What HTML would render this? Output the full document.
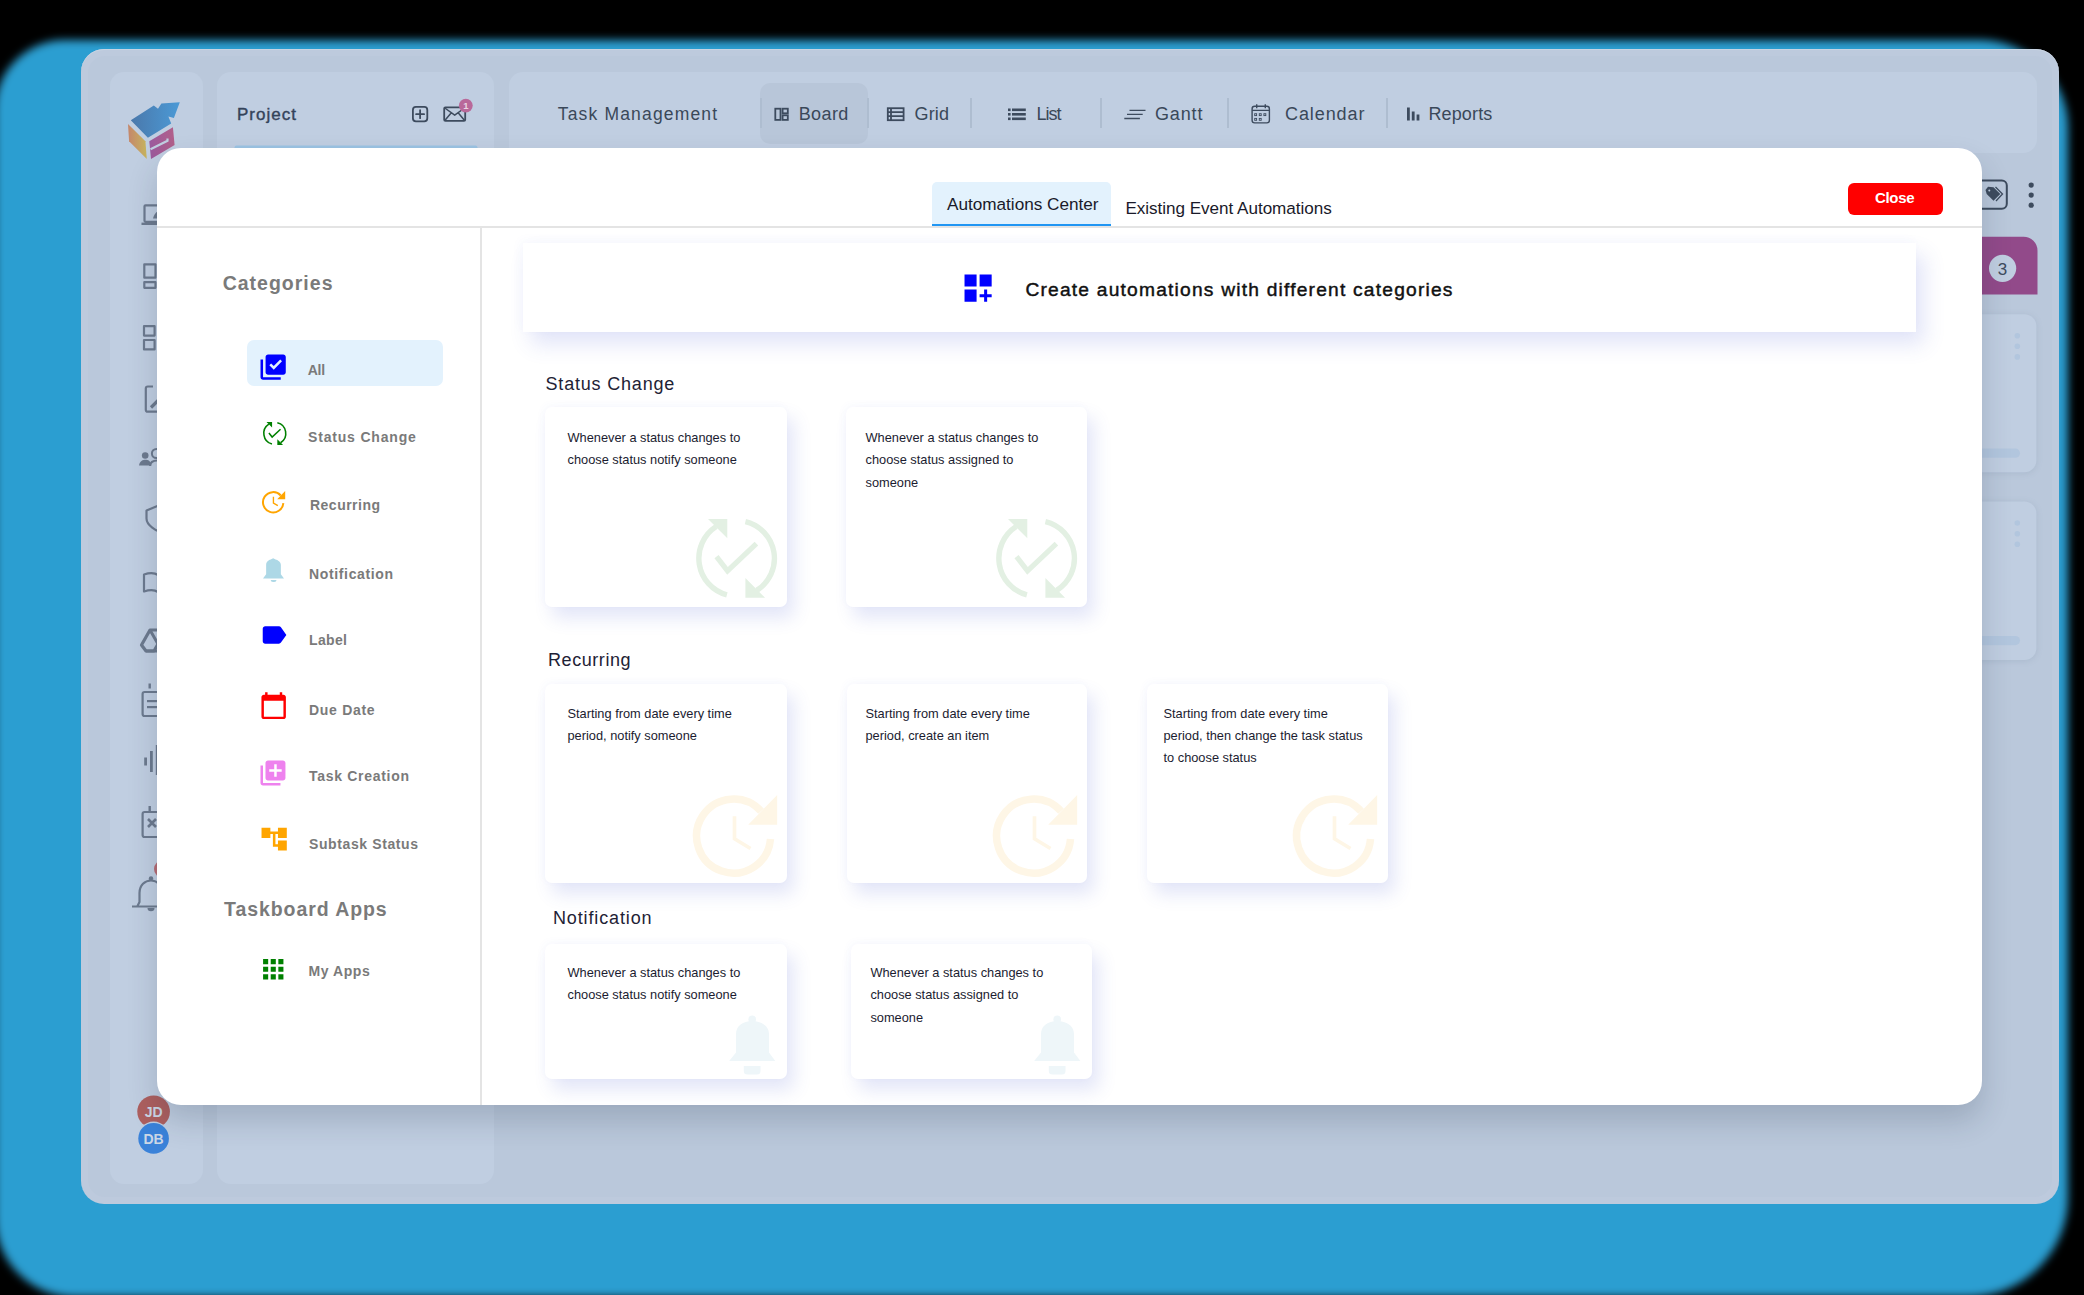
<!DOCTYPE html>
<html><head><meta charset="utf-8">
<style>
*{margin:0;padding:0;box-sizing:border-box}
html,body{width:2084px;height:1295px;overflow:hidden;background:#000;font-family:"Liberation Sans",sans-serif}
.a{position:absolute}
.t{position:absolute;white-space:nowrap;line-height:1}
#blue{left:-5px;top:40px;width:2073px;height:1257px;background:#2b9ed1;border-radius:70px 88px 100px 80px;filter:blur(4px)}
#win{left:81px;top:49px;width:1978px;height:1155px;background:#bdcadd;border-radius:23px;box-shadow:inset 0 1px 0 #c8d3e2}
#wini{left:88px;top:56px;width:1964px;height:1141px;background:#bac8db;border-radius:17px}
.pan{background:#c0cee1;border-radius:14px}
.vd{position:absolute;width:2px;background:#aebdd0}
#modal{left:157px;top:148px;width:1825px;height:957px;background:#fff;border-radius:24px;box-shadow:0 16px 30px rgba(25,40,65,.19)}
.card{position:absolute;background:#fff;border-radius:7px;box-shadow:7px 11px 18px rgba(70,90,210,.15),-2px -2px 8px rgba(70,90,210,.03)}
</style></head><body>
<div id="blue" class="a"></div>
<div id="win" class="a"></div>
<div id="wini" class="a"></div>
<div class="a pan" style="left:110px;top:72px;width:93px;height:1112px"></div>
<div class="a pan" style="left:217px;top:72px;width:277px;height:1112px"></div>
<div class="a pan" style="left:509px;top:72px;width:1528px;height:81px;border-radius:14px 14px 14px 0"></div>
<div class="a" style="left:760px;top:83px;width:108px;height:61px;background:#b8c6d9;border-radius:10px"></div>

<svg class="a" style="left:0;top:0;width:2084px;height:1295px" viewBox="0 0 2084 1295">
<defs>
<linearGradient id="gtop" x1="0" x2="1" y1="0" y2="0"><stop offset="0" stop-color="#4a78ab"/><stop offset="1" stop-color="#4b9ad6"/></linearGradient>
<linearGradient id="gleft" x1="0" x2="1" y1="0" y2="0"><stop offset="0" stop-color="#c4866c"/><stop offset="1" stop-color="#c6b45e"/></linearGradient>
<linearGradient id="gright" x1="0" x2="1" y1="0" y2="0"><stop offset="0" stop-color="#9a5a9e"/><stop offset="1" stop-color="#b25f8a"/></linearGradient>
</defs>
<polygon fill="url(#gtop)" points="130.8,120.3 153.8,105.4 158,108.8 161.4,103.6 179.8,102.2 173.9,118.1 168.4,116.5 171.2,123.4 147.9,137.7"/>
<polygon fill="url(#gleft)" points="128,124.1 145.4,141.2 146.8,158.9 129.1,141.2"/>
<polygon fill="url(#gright)" points="149.3,141.2 172.9,127.3 174.6,145 151,158.9"/>
<path d="M150.5 149.2 L167.5 140.8 L167.5 138.6" stroke="#c0cee1" stroke-width="2.2" fill="none"/>
<g fill="none" stroke="#3d4b5e" stroke-width="1.8" stroke-linecap="round" stroke-linejoin="round">
<rect x="412.9" y="106.9" width="14.4" height="14.4" rx="3"/>
<path d="M420.1 110.2v8M416.1 114.2h8"/>
<rect x="444.2" y="107.3" width="21" height="13.6" rx="1.2"/>
<path d="M444.8 108 L454.7 115.2 L464.6 108 M445 120.3 L450.5 113.7 M464.4 120.3 L459 113.7" stroke-width="1.5"/>
</g>
<circle cx="465.8" cy="105.6" r="6.9" fill="#b9699a"/>
<text x="465.8" y="109.3" font-family="Liberation Sans" font-weight="bold" font-size="9.5" fill="#e8d5e2" text-anchor="middle">1</text>
<rect x="234.5" y="145.5" width="243" height="4" rx="2" fill="#9cc3e3"/>
<g fill="none" stroke="#3d4b5e" stroke-width="1.8">
<rect x="775.3" y="108.7" width="5.2" height="11.2"/>
<rect x="782.6" y="108.7" width="5.2" height="4.6"/>
<rect x="782.6" y="115.3" width="5.2" height="4.6"/>
<rect x="887.8" y="108.2" width="15.8" height="12"/>
<path d="M888 112.2h15.6M888 116.2h15.6M891 108.5v12"/>
<path d="M1129.5 110.3h16M1127 114.4h15.7M1124.3 118.5h15.6" stroke-width="1.3"/>
<rect x="1252.1" y="106.3" width="17.3" height="16.6" rx="2.6" stroke-width="1.4"/>
<path d="M1252.1 110.4h17.3M1256.7 104.2v4M1265.3 104.2v4" stroke-width="1.4"/>
<g stroke-width="0.9"><rect x="1254.7" y="113.7" width="1.9" height="1.9"/><rect x="1259.3" y="113.7" width="1.9" height="1.9"/><rect x="1263.9" y="113.7" width="1.9" height="1.9"/><rect x="1254.7" y="118.4" width="1.9" height="1.9"/><rect x="1259.3" y="118.4" width="1.9" height="1.9"/></g>
</g>
<g fill="#3d4b5e">
<rect x="1008" y="108.5" width="2.6" height="2.6"/><rect x="1012" y="108.5" width="13.8" height="2.6"/>
<rect x="1008" y="113" width="2.6" height="2.6"/><rect x="1012" y="113" width="13.8" height="2.6"/>
<rect x="1008" y="117.5" width="2.6" height="2.6"/><rect x="1012" y="117.5" width="13.8" height="2.6"/>
<rect x="1407" y="107.5" width="2.8" height="13"/><rect x="1411.8" y="111.5" width="2.8" height="9"/><rect x="1416.6" y="114.5" width="2.8" height="6"/>
</g>
<!-- left sidebar icons -->
<g fill="none" stroke="#6c7a8e" stroke-width="2.2" stroke-linejoin="round">
<rect x="144.5" y="205.3" width="24" height="16.5" rx="1"/>
<path d="M141.5 223.8h29" stroke-width="2.4"/>
<rect x="144.3" y="264.3" width="11.2" height="13.4"/>
<rect x="144.3" y="282.2" width="11.2" height="5.6"/>
<rect x="144" y="326.2" width="10.6" height="9.4"/>
<rect x="144" y="340" width="10.6" height="9.4"/>
<path d="M153 386.5 H147.8 A2 2 0 0 0 145.8 388.5 V409.7 A2 2 0 0 0 147.8 411.7 H166"/><path d="M151 407.5 L162 396.5" stroke-width="3.2"/>
<path d="M146.5 510.4 L158 505.8 L169 510.4 V518.5 C169 526 158 531 158 531 C158 531 146.5 526 146.5 518.5 Z"/>
<path d="M144 574.5 C150 572.5 155 573 158 575 V592 C155 590 150 589.5 144 591.5 Z"/>
<rect x="142.6" y="692" width="22" height="24" rx="2"/>
<rect x="142.6" y="812" width="22" height="25" rx="2"/>
<path d="M148 819l8 8M156 819l-8 8" stroke-width="2.6"/>
<path d="M132 906.5h38 M137.5 906 L139.5 902 V893 C139.5 885 145 880.5 151 880.5 C157 880.5 162.5 885 162.5 893 V902 L164.5 906" />
</g>
<g fill="#6c7a8e">
<path d="M166 208.5 C160 208.5 154.5 212 153 218.5 H157 C158.5 214.5 162 212.5 166 212.5Z"/>
<circle cx="145.2" cy="455.5" r="3.3"/>
<path d="M139 465.5 C139.5 461 143 459.8 145.5 459.8 C148 459.8 151 461 151.5 465.5Z"/>
<circle cx="156.5" cy="453.5" r="4.6" fill="none" stroke="#6c7a8e" stroke-width="2"/><path d="M150 466 C150.5 461.5 153 460.5 157 460.5" fill="none" stroke="#6c7a8e" stroke-width="2"/>
<path d="M141.5 645 L150 630 H158 L162 637 L154 651 H146Z" fill="none" stroke="#6c7a8e" stroke-width="3.2" stroke-linejoin="round"/><path d="M150 630 L158 644 M146 651 H162" stroke="#6c7a8e" stroke-width="3"/>
<rect x="148.5" y="683.5" width="2.4" height="5"/><rect x="157" y="683.5" width="2.4" height="5"/>
<rect x="147" y="700" width="12" height="2.2"/><rect x="147" y="706" width="12" height="2.2"/>
<rect x="148.5" y="806" width="2.4" height="5"/>
<rect x="144.2" y="757.5" width="2.8" height="8"/><rect x="150" y="751" width="2.8" height="21"/><rect x="155.8" y="745" width="2.8" height="30"/>
<circle cx="151" cy="878.5" r="2.2"/><path d="M147.5 908 a3.5 3.2 0 0 0 7 0z"/>
</g>
<circle cx="163" cy="869" r="9" fill="#b56c74"/>
<!-- avatars -->
<circle cx="153.6" cy="1111.7" r="16.3" fill="#ad5f5f"/>
<circle cx="153.6" cy="1138.4" r="16.8" fill="#c0cee1"/>
<circle cx="153.6" cy="1138.4" r="15.3" fill="#3a82d9"/>
<text x="153.6" y="1117" font-family="Liberation Sans" font-weight="bold" font-size="14" fill="#cbd7e6" text-anchor="middle">JD</text>
<text x="153.6" y="1143.6" font-family="Liberation Sans" font-weight="bold" font-size="14" fill="#cbd7e6" text-anchor="middle">DB</text>
<!-- right side -->
<rect x="1960" y="180.5" width="46.8" height="28.2" rx="5" fill="none" stroke="#3d4b5e" stroke-width="2"/>
<path fill="#3d4b5e" d="M1985.5 190 L1988 186.8 L1993.5 187.3 L2000.3 194 L1993.5 200.8 L1986.7 194Z"/>
<path d="M1995.5 187 L2002.5 194 L1996 201" stroke="#3d4b5e" stroke-width="1.3" fill="none"/>
<circle cx="1989.3" cy="190.5" r="1" fill="#c0cee1"/>
<circle cx="2031.2" cy="185.1" r="2.6" fill="#3d4b5e"/><circle cx="2031.2" cy="195.1" r="2.6" fill="#3d4b5e"/><circle cx="2031.2" cy="205.2" r="2.6" fill="#3d4b5e"/>
<path fill="#924a8a" d="M1960 236.7 H2023.5 A14 14 0 0 1 2037.5 250.7 V294.4 H1960Z"/>
<circle cx="2002.6" cy="268.3" r="13.6" fill="#c0cee1"/>
<text x="2002.6" y="274.5" font-family="Liberation Sans" font-size="17" fill="#3d4b5e" text-anchor="middle">3</text>
<g fill="#c0cee1" style="filter:drop-shadow(0 1px 3px rgba(60,80,110,.12))">
<rect x="1950" y="314.3" width="86.4" height="158" rx="12"/>
<rect x="1950" y="501.4" width="86.4" height="158.6" rx="12"/>
</g>
<g fill="#b2c6de">
<circle cx="2017.3" cy="335.7" r="2.8"/><circle cx="2017.3" cy="346.3" r="2.8"/><circle cx="2017.3" cy="356.9" r="2.8"/>
<rect x="1950" y="448.6" width="70" height="9.2" rx="4.6"/>
<circle cx="2017.3" cy="523" r="2.8"/><circle cx="2017.3" cy="533.7" r="2.8"/><circle cx="2017.3" cy="544.3" r="2.8"/>
<rect x="1950" y="636" width="70" height="9.2" rx="4.6"/>
</g>
</svg>
<div class="t" style="left:237.00px;top:105.61px;font-size:17px;color:#34435a;letter-spacing:1.031px;-webkit-text-stroke:0.4px #34435a;">Project</div>
<div class="t" style="left:557.80px;top:106.09px;font-size:17.5px;color:#3a4859;letter-spacing:1.165px;">Task Management</div>
<div class="vd" style="left:760px;top:98px;height:30px"></div>
<div class="vd" style="left:867px;top:98px;height:30px"></div>
<div class="vd" style="left:970px;top:98px;height:30px"></div>
<div class="vd" style="left:1100px;top:98px;height:30px"></div>
<div class="vd" style="left:1227px;top:98px;height:30px"></div>
<div class="vd" style="left:1386px;top:98px;height:30px"></div>
<div class="t" style="left:798.70px;top:105.06px;font-size:18px;color:#3a4859;letter-spacing:0.391px;">Board</div>
<div class="t" style="left:914.60px;top:105.06px;font-size:18px;color:#3a4859;letter-spacing:0.131px;">Grid</div>
<div class="t" style="left:1036.40px;top:105.06px;font-size:18px;color:#3a4859;letter-spacing:-0.970px;">List</div>
<div class="t" style="left:1155.00px;top:105.06px;font-size:18px;color:#3a4859;letter-spacing:0.844px;">Gantt</div>
<div class="t" style="left:1285.00px;top:105.06px;font-size:18px;color:#3a4859;letter-spacing:0.907px;">Calendar</div>
<div class="t" style="left:1428.40px;top:105.06px;font-size:18px;color:#3a4859;letter-spacing:0.145px;">Reports</div>
<div id="modal" class="a"></div>
<div class="a" style="left:157px;top:225.5px;width:1825px;height:2px;background:#e4e4e4"></div>
<div class="a" style="left:480px;top:227px;width:2px;height:878px;background:#e4e4e4"></div>
<div class="a" style="left:931.5px;top:181.6px;width:179px;height:44px;background:#e3f2fd;border-radius:5px 5px 0 0;border-bottom:2px solid #2196f3"></div>
<div class="t" style="left:947.00px;top:195.94px;font-size:17.2px;color:#1a1a2a;letter-spacing:-0.024px;">Automations Center</div>
<div class="t" style="left:1125.40px;top:199.82px;font-size:17.1px;color:#1a1a2a;letter-spacing:-0.029px;">Existing Event Automations</div>
<div class="a" style="left:1847.5px;top:183px;width:95px;height:31.5px;background:#ff0000;border-radius:6px"></div>
<div class="t" style="left:1875.00px;top:190.40px;font-size:15px;color:#fff;font-weight:bold;letter-spacing:-0.337px;">Close</div>
<div class="t" style="left:222.70px;top:274.49px;font-size:19.5px;color:#7a7a7a;font-weight:bold;letter-spacing:1.001px;">Categories</div>
<div class="a" style="left:246.8px;top:340px;width:196px;height:45.5px;background:#e3f2fd;border-radius:7px"></div>
<svg class="a" style="left:258.18px;top:352.18px;width:30.299999999999997px;height:30.299999999999997px;" viewBox="0 0 24 24"><path fill="#0000ff" d="M20 2H8c-1.1 0-2 .9-2 2v12c0 1.1.9 2 2 2h12c1.1 0 2-.9 2-2V4c0-1.1-.9-2-2-2zm-7.53 12L9 10.5l1.4-1.41 2.07 2.08L17.6 6 19 7.41 12.47 14zM4 6H2v14c0 1.1.9 2 2 2h14v-2H4V6z"/></svg>
<div class="t" style="left:307.70px;top:362.95px;font-size:14px;color:#7a7a7a;font-weight:bold;letter-spacing:-0.245px;">All</div>
<svg class="a" style="left:262.60px;top:422.10px;width:23.50px;height:23.00px;overflow:visible" viewBox="0 0 81 79" preserveAspectRatio="none"><path d="M30.9 75.9A37.8 37.8 0 0 1 20.2 7.6M49.4 2.6A37.8 37.8 0 0 1 60.7 71.4" fill="none" stroke="#008000" stroke-width="5.4"/><path d="M12 0H31.3V19.3ZM49.4 59.1V78.8H69.1Z" fill="#008000"/><path d="M20.5 37.7L31.5 51.8L60.4 24.7" fill="none" stroke="#008000" stroke-width="5.2"/></svg>
<div class="t" style="left:308.00px;top:429.95px;font-size:14px;color:#7a7a7a;font-weight:bold;letter-spacing:0.815px;">Status Change</div>
<svg class="a" style="left:262.00px;top:490.60px;width:23.20px;height:22.40px;overflow:visible" viewBox="0 0 84.2 81.6" preserveAspectRatio="none"><path d="M77.5 44A37 37 0 1 1 68.1 16.3" fill="none" stroke="#ffa500" stroke-width="7.2"/><path d="M55.2 29.8H84.2V0Z" fill="#ffa500"/><path d="M41.5 21.3V43.8L57.5 53.5" fill="none" stroke="#ffa500" stroke-width="5"/></svg>
<div class="t" style="left:310.00px;top:498.45px;font-size:14px;color:#7a7a7a;font-weight:bold;letter-spacing:0.484px;">Recurring</div>
<svg class="a" style="left:263.2px;top:557.7px;width:21px;height:24px" viewBox="0 0 20.7 23.3" fill="#add8e6"><path d="M3.1 15.8V6.5C3.1 4 5.5 1.8 7.6 1.4L10 0 12.4 1.4C14.5 1.8 17.6 4 17.6 6.5V15.8L20.7 20H0Z"/><path d="M7.6 21.5h5.7a2.85 2 0 0 1-5.7 0z"/></svg>
<div class="t" style="left:309.10px;top:566.85px;font-size:14px;color:#7a7a7a;font-weight:bold;letter-spacing:0.628px;">Notification</div>
<svg class="a" style="left:258.67px;top:620.48px;width:29.860150375939817px;height:29.860150375939817px;" viewBox="0 0 24 24"><path fill="#0000ff" d="M17.63 5.84C17.27 5.33 16.67 5 16 5L5 5.01C3.9 5.01 3 5.9 3 7v10c0 1.1.9 1.99 2 1.99L16 19c.67 0 1.27-.33 1.63-.84L22 12l-4.37-6.16z"/></svg>
<div class="t" style="left:309.00px;top:632.65px;font-size:14px;color:#7a7a7a;font-weight:bold;letter-spacing:0.358px;">Label</div>
<svg class="a" style="left:258.76px;top:691.18px;width:29.32909090909091px;height:29.32909090909091px;" viewBox="0 0 24 24"><path fill="#ff0000" d="M20 3h-1V1h-2v2H7V1H5v2H4c-1.1 0-2 .9-2 2v16c0 1.1.9 2 2 2h16c1.1 0 2-.9 2-2V5c0-1.1-.9-2-2-2zm0 18H4V8h16v13z"/></svg>
<div class="t" style="left:309.00px;top:702.75px;font-size:14px;color:#7a7a7a;font-weight:bold;letter-spacing:0.702px;">Due Date</div>
<svg class="a" style="left:258.20px;top:757.50px;width:29.940000000000023px;height:29.940000000000023px;" viewBox="0 0 24 24"><path fill="#ee82ee" d="M4 6H2v14c0 1.1.9 2 2 2h14v-2H4V6zm16-4H8c-1.1 0-2 .9-2 2v12c0 1.1.9 2 2 2h12c1.1 0 2-.9 2-2V4c0-1.1-.9-2-2-2zm-1 9h-4v4h-2v-4H9V9h4V5h2v4h4v2z"/></svg>
<div class="t" style="left:309.00px;top:769.05px;font-size:14px;color:#7a7a7a;font-weight:bold;letter-spacing:0.704px;">Task Creation</div>
<svg class="a" style="left:258.67px;top:824.21px;width:30.333333333333332px;height:30.333333333333332px;" viewBox="0 0 24 24"><path fill="#ffa500" d="M22 11V3h-7v3H9V3H2v8h7V8h2v10h4v3h7v-8h-7v3h-2V8h2v3z"/></svg>
<div class="t" style="left:309.00px;top:836.55px;font-size:14px;color:#7a7a7a;font-weight:bold;letter-spacing:0.604px;">Subtask Status</div>
<div class="t" style="left:224.00px;top:899.69px;font-size:19.5px;color:#7a7a7a;font-weight:bold;letter-spacing:0.930px;">Taskboard Apps</div>
<svg class="a" style="left:258.21px;top:953.91px;width:30.52499999999999px;height:30.52499999999999px;" viewBox="0 0 24 24"><path fill="#008000" d="M4 8h4V4H4v4zm6 12h4v-4h-4v4zm-6 0h4v-4H4v4zm0-6h4v-4H4v4zm6 0h4v-4h-4v4zm6-10v4h4V4h-4zm-6 4h4V4h-4v4zm6 6h4v-4h-4v4zm0 6h4v-4h-4v4z"/></svg>
<div class="t" style="left:308.40px;top:964.15px;font-size:14px;color:#7a7a7a;font-weight:bold;letter-spacing:0.580px;">My Apps</div>
<div class="a" style="left:523px;top:243px;width:1393px;height:89px;background:#fff;box-shadow:8px 12px 20px rgba(70,90,210,.16),-3px -3px 10px rgba(70,90,210,.03)"></div>
<svg class="a" style="left:960.38px;top:269.58px;width:36.20000000000001px;height:36.20000000000001px;" viewBox="0 0 24 24"><path fill="#0000ff" d="M3 3h8v8H3zm10 0h8v8h-8zM3 13h8v8H3zm15 0h-2v3h-3v2h3v3h2v-3h3v-2h-3z"/></svg>
<div class="t" style="left:1025.40px;top:279.85px;font-size:19.2px;color:#111;letter-spacing:1.209px;-webkit-text-stroke:0.45px #111;">Create automations with different categories</div>
<div class="t" style="left:545.50px;top:375.46px;font-size:18px;color:#1e2235;letter-spacing:0.810px;">Status Change</div>
<div class="t" style="left:548.00px;top:650.76px;font-size:18px;color:#1e2235;letter-spacing:0.571px;">Recurring</div>
<div class="t" style="left:553.00px;top:909.36px;font-size:18px;color:#1e2235;letter-spacing:0.869px;">Notification</div>
<div class="card" style="left:545px;top:407px;width:242px;height:200px"></div>
<svg class="a" style="left:695.80px;top:518.50px;width:81.00px;height:79.00px;overflow:visible" viewBox="0 0 81 79" preserveAspectRatio="none"><path d="M30.9 75.9A37.8 37.8 0 0 1 20.2 7.6M49.4 2.6A37.8 37.8 0 0 1 60.7 71.4" fill="none" stroke="#e3f0e3" stroke-width="5.4"/><path d="M12 0H31.3V19.3ZM49.4 59.1V78.8H69.1Z" fill="#e3f0e3"/><path d="M20.5 37.7L31.5 51.8L60.4 24.7" fill="none" stroke="#e3f0e3" stroke-width="5.2"/></svg>
<div class="t" style="left:567.50px;top:431.96px;font-size:12.8px;color:#1b1c30;">Whenever a status changes to</div>
<div class="t" style="left:567.50px;top:454.26px;font-size:12.8px;color:#1b1c30;">choose status notify someone</div>
<div class="card" style="left:846px;top:407px;width:241px;height:200px"></div>
<svg class="a" style="left:996.40px;top:518.50px;width:81.00px;height:79.00px;overflow:visible" viewBox="0 0 81 79" preserveAspectRatio="none"><path d="M30.9 75.9A37.8 37.8 0 0 1 20.2 7.6M49.4 2.6A37.8 37.8 0 0 1 60.7 71.4" fill="none" stroke="#e3f0e3" stroke-width="5.4"/><path d="M12 0H31.3V19.3ZM49.4 59.1V78.8H69.1Z" fill="#e3f0e3"/><path d="M20.5 37.7L31.5 51.8L60.4 24.7" fill="none" stroke="#e3f0e3" stroke-width="5.2"/></svg>
<div class="t" style="left:865.50px;top:431.96px;font-size:12.8px;color:#1b1c30;">Whenever a status changes to</div>
<div class="t" style="left:865.50px;top:454.26px;font-size:12.8px;color:#1b1c30;">choose status assigned to</div>
<div class="t" style="left:865.50px;top:476.56px;font-size:12.8px;color:#1b1c30;">someone</div>
<div class="card" style="left:545px;top:684px;width:242px;height:199px"></div>
<svg class="a" style="left:692.70px;top:795.00px;width:84.20px;height:81.60px;overflow:visible" viewBox="0 0 84.2 81.6" preserveAspectRatio="none"><path d="M77.5 44A37 37 0 1 1 68.1 16.3" fill="none" stroke="#fef6e6" stroke-width="7.5"/><path d="M55.2 29.8H84.2V0Z" fill="#fef6e6"/><path d="M41.5 21.3V43.8L57.5 53.5" fill="none" stroke="#fef6e6" stroke-width="3.7"/></svg>
<div class="t" style="left:567.50px;top:707.76px;font-size:12.8px;color:#1b1c30;">Starting from date every time</div>
<div class="t" style="left:567.50px;top:730.06px;font-size:12.8px;color:#1b1c30;">period, notify someone</div>
<div class="card" style="left:847px;top:684px;width:240px;height:199px"></div>
<svg class="a" style="left:992.70px;top:795.00px;width:84.20px;height:81.60px;overflow:visible" viewBox="0 0 84.2 81.6" preserveAspectRatio="none"><path d="M77.5 44A37 37 0 1 1 68.1 16.3" fill="none" stroke="#fef6e6" stroke-width="7.5"/><path d="M55.2 29.8H84.2V0Z" fill="#fef6e6"/><path d="M41.5 21.3V43.8L57.5 53.5" fill="none" stroke="#fef6e6" stroke-width="3.7"/></svg>
<div class="t" style="left:865.50px;top:707.76px;font-size:12.8px;color:#1b1c30;">Starting from date every time</div>
<div class="t" style="left:865.50px;top:730.06px;font-size:12.8px;color:#1b1c30;">period, create an item</div>
<div class="card" style="left:1147px;top:684px;width:241px;height:199px"></div>
<svg class="a" style="left:1292.70px;top:795.00px;width:84.20px;height:81.60px;overflow:visible" viewBox="0 0 84.2 81.6" preserveAspectRatio="none"><path d="M77.5 44A37 37 0 1 1 68.1 16.3" fill="none" stroke="#fef6e6" stroke-width="7.5"/><path d="M55.2 29.8H84.2V0Z" fill="#fef6e6"/><path d="M41.5 21.3V43.8L57.5 53.5" fill="none" stroke="#fef6e6" stroke-width="3.7"/></svg>
<div class="t" style="left:1163.50px;top:707.76px;font-size:12.8px;color:#1b1c30;">Starting from date every time</div>
<div class="t" style="left:1163.50px;top:730.06px;font-size:12.8px;color:#1b1c30;">period, then change the task status</div>
<div class="t" style="left:1163.50px;top:752.36px;font-size:12.8px;color:#1b1c30;">to choose status</div>
<div class="card" style="left:545px;top:944px;width:242px;height:135px"></div>
<svg class="a" style="left:729.2px;top:1015px;width:47px;height:60px" viewBox="0 0 47 60" fill="#eef6f9"><path d="M7 37.5V19C7 11 14 6 23.2 6S40 11 40 19V37.5L46.3 46H0.2Z"/><circle cx="23.2" cy="4.2" r="3.8"/><path d="M14.8 51h16.7v5a3.5 3.5 0 0 1-3.5 3.5h-9.7a3.5 3.5 0 0 1-3.5-3.5z"/></svg>
<div class="t" style="left:567.50px;top:966.96px;font-size:12.8px;color:#1b1c30;">Whenever a status changes to</div>
<div class="t" style="left:567.50px;top:989.26px;font-size:12.8px;color:#1b1c30;">choose status notify someone</div>
<div class="card" style="left:851px;top:944px;width:241px;height:135px"></div>
<svg class="a" style="left:1034.2px;top:1015px;width:47px;height:60px" viewBox="0 0 47 60" fill="#eef6f9"><path d="M7 37.5V19C7 11 14 6 23.2 6S40 11 40 19V37.5L46.3 46H0.2Z"/><circle cx="23.2" cy="4.2" r="3.8"/><path d="M14.8 51h16.7v5a3.5 3.5 0 0 1-3.5 3.5h-9.7a3.5 3.5 0 0 1-3.5-3.5z"/></svg>
<div class="t" style="left:870.40px;top:966.96px;font-size:12.8px;color:#1b1c30;">Whenever a status changes to</div>
<div class="t" style="left:870.40px;top:989.26px;font-size:12.8px;color:#1b1c30;">choose status assigned to</div>
<div class="t" style="left:870.40px;top:1011.56px;font-size:12.8px;color:#1b1c30;">someone</div>
</body></html>
